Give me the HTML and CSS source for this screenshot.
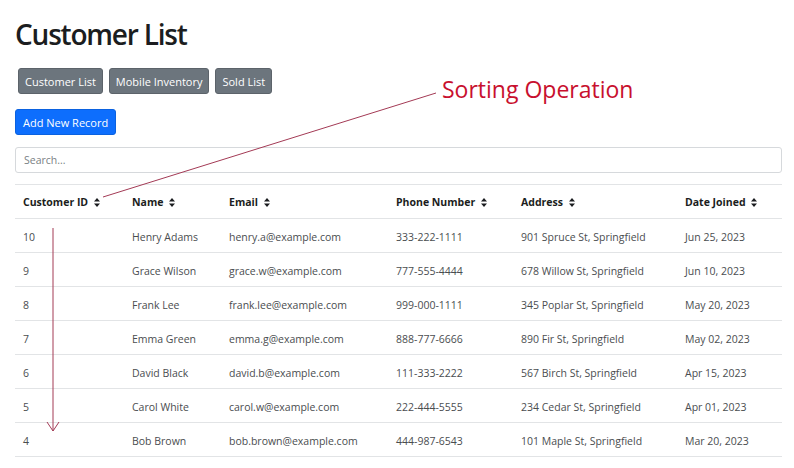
FILE: index.html
```html
<!DOCTYPE html>
<html>
<head>
<meta charset="utf-8">
<link rel="stylesheet" href="styles.css">
</head>
<body>
<div class="page">
  <h1 class="title">Customer List</h1>
  <div class="nav">
    <button class="btn btn-gray">Customer List</button>
    <button class="btn btn-gray">Mobile Inventory</button>
    <button class="btn btn-gray">Sold List</button>
  </div>
  <div class="actions">
    <button class="btn btn-blue">Add New Record</button>
  </div>
  <input class="search" type="text" placeholder="Search...">
  <table class="grid">
    <colgroup>
      <col class="c1"><col class="c2"><col class="c3"><col class="c4"><col class="c5"><col class="c6">
    </colgroup>
    <thead>
      <tr>
        <th>Customer ID <svg class="sort" viewBox="0 0 6 9"><path d="M3 0L6 3.5H0Z M3 9L0 5.5H6Z"/></svg></th>
        <th>Name <svg class="sort" viewBox="0 0 6 9"><path d="M3 0L6 3.5H0Z M3 9L0 5.5H6Z"/></svg></th>
        <th>Email <svg class="sort" viewBox="0 0 6 9"><path d="M3 0L6 3.5H0Z M3 9L0 5.5H6Z"/></svg></th>
        <th>Phone Number <svg class="sort" viewBox="0 0 6 9"><path d="M3 0L6 3.5H0Z M3 9L0 5.5H6Z"/></svg></th>
        <th>Address <svg class="sort" viewBox="0 0 6 9"><path d="M3 0L6 3.5H0Z M3 9L0 5.5H6Z"/></svg></th>
        <th>Date Joined <svg class="sort" viewBox="0 0 6 9"><path d="M3 0L6 3.5H0Z M3 9L0 5.5H6Z"/></svg></th>
      </tr>
    </thead>
    <tbody>
      <tr><td>10</td><td>Henry Adams</td><td>henry.a@example.com</td><td>333-222-1111</td><td>901 Spruce St, Springfield</td><td>Jun 25, 2023</td></tr>
      <tr><td>9</td><td>Grace Wilson</td><td>grace.w@example.com</td><td>777-555-4444</td><td>678 Willow St, Springfield</td><td>Jun 10, 2023</td></tr>
      <tr><td>8</td><td>Frank Lee</td><td>frank.lee@example.com</td><td>999-000-1111</td><td>345 Poplar St, Springfield</td><td>May 20, 2023</td></tr>
      <tr><td>7</td><td>Emma Green</td><td>emma.g@example.com</td><td>888-777-6666</td><td>890 Fir St, Springfield</td><td>May 02, 2023</td></tr>
      <tr><td>6</td><td>David Black</td><td>david.b@example.com</td><td>111-333-2222</td><td>567 Birch St, Springfield</td><td>Apr 15, 2023</td></tr>
      <tr><td>5</td><td>Carol White</td><td>carol.w@example.com</td><td>222-444-5555</td><td>234 Cedar St, Springfield</td><td>Apr 01, 2023</td></tr>
      <tr><td>4</td><td>Bob Brown</td><td>bob.brown@example.com</td><td>444-987-6543</td><td>101 Maple St, Springfield</td><td>Mar 20, 2023</td></tr>
    </tbody>
  </table>
</div>
<div class="note">Sorting Operation</div>
<svg class="marks" width="794" height="468" viewBox="0 0 794 468">
  <line x1="436" y1="93" x2="103" y2="197" class="mk"/>
  <line x1="53" y1="228" x2="53" y2="431" class="mk"/>
  <polyline points="47,422 53,431 59,422" class="mk"/>
</svg>
</body>
</html>
```
FILE: styles.css
```css
html, body {
  margin: 0;
  padding: 0;
  background: #ffffff;
}
body {
  font-family: "Open Sans", "Noto Sans", sans-serif;
  color: #212529;
  width: 794px;
  height: 468px;
  overflow: hidden;
  position: relative;
}
.page {
  padding: 14px 12px 0 15px;
  display: flex;
  flex-direction: column;
}
.title {
  margin: 0;
  font-size: 28px;
  font-weight: 600;
  line-height: 40px;
  color: #1b1d20;
  letter-spacing: -1.2px;
}
.nav {
  display: flex;
  gap: 6px;
  margin: 14px 0 0 3px;
}
.btn {
  font-family: inherit;
  font-size: 11px;
  height: 26px;
  padding: 0 6px;
  border-radius: 3px;
  color: #ffffff;
  cursor: pointer;
}
.btn-gray {
  background: #6c757d;
  border: 1px solid #5c636a;
}
.btn-blue {
  background: #0d6efd;
  border: 1px solid #0b62e0;
  padding: 0 7px;
}
.actions {
  display: flex;
  margin-top: 15px;
}
.search {
  margin-top: 12px;
  height: 26px;
  box-sizing: border-box;
  border: 1px solid #d6d9dc;
  border-radius: 3px;
  padding: 0 8px;
  font-family: inherit;
  font-size: 10.5px;
  color: #495057;
}
.search::placeholder {
  color: #7a7f84;
}
.grid {
  margin-top: 11px;
  border-collapse: collapse;
  table-layout: fixed;
  width: 767px;
  font-size: 10.5px;
}
.c1 { width: 109px; }
.c2 { width: 97px; }
.c3 { width: 167px; }
.c4 { width: 125px; }
.c5 { width: 164px; }
.c6 { width: 105px; }
.grid th, .grid td {
  text-align: left;
  padding: 0 8px;
  height: 34px;
  box-sizing: border-box;
  border-bottom: 1px solid #e2e4e6;
  white-space: nowrap;
}
.grid thead tr {
  border-top: 1px solid #e2e4e6;
}
.grid th {
  font-weight: 700;
  color: #1b1d20;
}
.grid td {
  color: #4a4d50;
  padding-top: 2px;
}
.sort {
  width: 6px;
  height: 9px;
  margin-left: 3px;
  vertical-align: -1px;
  fill: #1b1d20;
}
.note {
  position: absolute;
  left: 442px;
  top: 73px;
  font-family: "Open Sans", "Noto Sans", sans-serif;
  font-size: 23px;
  color: #c8102e;
  line-height: 32px;
}
.marks {
  position: absolute;
  left: 0;
  top: 0;
  pointer-events: none;
}
.mk {
  stroke: #a33a55;
  stroke-width: 1;
  fill: none;
}
```
